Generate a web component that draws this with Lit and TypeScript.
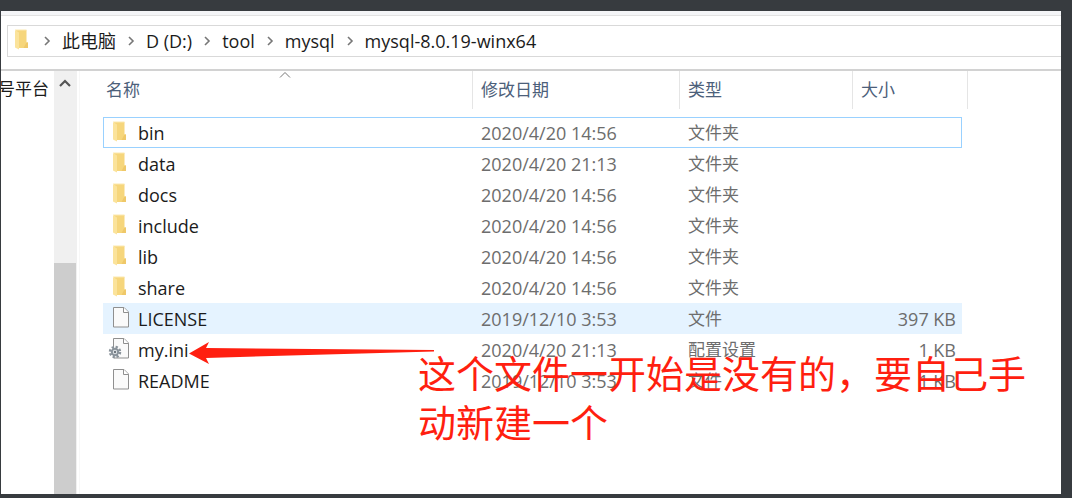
import { LitElement, html, svg, css } from "lit";
import { customElement, property } from "lit/decorators.js";

type Kind = "folder" | "file" | "config";

interface Entry {
  name: string;
  kind: Kind;
  date: string;
  type: string;
  size: string;
  state?: "focused" | "hovered";
}

const ENTRIES: Entry[] = [
  { name: "bin", kind: "folder", date: "2020/4/20 14:56", type: "文件夹", size: "", state: "focused" },
  { name: "data", kind: "folder", date: "2020/4/20 21:13", type: "文件夹", size: "" },
  { name: "docs", kind: "folder", date: "2020/4/20 14:56", type: "文件夹", size: "" },
  { name: "include", kind: "folder", date: "2020/4/20 14:56", type: "文件夹", size: "" },
  { name: "lib", kind: "folder", date: "2020/4/20 14:56", type: "文件夹", size: "" },
  { name: "share", kind: "folder", date: "2020/4/20 14:56", type: "文件夹", size: "" },
  { name: "LICENSE", kind: "file", date: "2019/12/10 3:53", type: "文件", size: "397 KB", state: "hovered" },
  { name: "my.ini", kind: "config", date: "2020/4/20 21:13", type: "配置设置", size: "1 KB" },
  { name: "README", kind: "file", date: "2019/12/10 3:53", type: "文件", size: "1 KB" },
];

const PATH = ["此电脑", "D (D:)", "tool", "mysql", "mysql-8.0.19-winx64"];

const folder = svg`
  <path d="M8 3H18.500V15.500H20V21H8Z" fill="#f6d67c"/>
  <path d="M18.500 15.500H20V21H15.500Z" fill="#efc869"/>
  <path d="M7 3L11 5.500V22.500L7 20.500Z" fill="#fbe39b"/>
  <path d="M7 3H18.500" stroke="#fbe8b0" stroke-width="1"/>`;

const sheet = svg`
  <path d="M7.500 2.500H18L22.500 7V22H7.500Z" fill="#fafafa" stroke="#8f8f8f"/>
  <path d="M17.500 2.500V7.500H22.500" fill="#fff" stroke="#8f8f8f"/>`;

const gear = svg`
  <circle cx="9" cy="16" r="5" fill="none" stroke="#8a939b" stroke-width="2.500" stroke-dasharray="2.200 1.730"/>
  <circle cx="9" cy="16" r="3.200" fill="#e3e7ea" stroke="#8a939b" stroke-width="2"/>
  <circle cx="9" cy="16" r="1.200" fill="#6d757c"/>`;

@customElement("file-icon")
export class FileIcon extends LitElement {
  @property() kind: Kind = "folder";

  static styles = css`
    :host { display: block; flex: none; width: 26px; height: 24px; }
    .icon { display: block; width: 100%; height: 100%; }
  `;

  render() {
    return html`<svg class="icon" viewBox="0 2 26 24" aria-hidden="true">
      ${this.kind === "folder" ? folder : sheet}
      ${this.kind === "config" ? gear : null}
    </svg>`;
  }
}

@customElement("app-root")
export class AppRoot extends LitElement {
  static styles = css`
    :host {
      display: block;
      font-family: "Open Sans", "Noto Sans CJK SC", sans-serif;
      font-size: 17px;
      line-height: 24px;
      color: #1b1b1b;
    }
    .desktop {
      box-sizing: border-box;
      display: flex;
      height: 100vh;
      padding: 11px 11px 4px 1px;
      background: #373b3f;
    }
    .window {
      position: relative;
      display: flex;
      flex: 1;
      flex-direction: column;
      min-width: 0;
      overflow: hidden;
      background: #fff;
    }
    button {
      margin: 0;
      padding: 0;
      border: 0;
      background: none;
      color: inherit;
      font: inherit;
      text-align: left;
    }
    .ribbon { flex: none; height: 4px; background: #f4f5f7; border-bottom: 1px solid #e2e2e2; }
    .toolbar { flex: none; padding: 9px 0 12px 6px; border-bottom: 2px solid #d2d2d2; }
    .address {
      display: flex;
      align-items: center;
      height: 30px;
      border: 1px solid #d9d9d9;
      border-right: 0;
      font-size: 18px;
    }
    .crumbs { display: flex; align-items: center; margin: 0; padding: 0; list-style: none; }
    .crumb { display: flex; align-items: center; white-space: nowrap; }
    .sep { display: block; width: 8px; height: 12px; margin: 0 11px; }
    .crumb:first-child .sep { margin-left: 9px; }
    .body { display: flex; flex: 1; min-height: 0; }
    .tree {
      display: flex;
      flex: none;
      justify-content: flex-end;
      box-sizing: border-box;
      width: 53px;
      padding: 6px 5px 0 0;
      overflow: hidden;
      white-space: nowrap;
    }
    .tree button { align-self: flex-start; }
    .scroll {
      display: flex;
      flex: none;
      flex-direction: column;
      width: 22px;
      border-right: 1px solid #f0f0f0;
      background: #f0f0f0;
    }
    .up { display: flex; justify-content: center; padding: 7px 0; }
    .thumb { flex: 1; margin-top: 168px; background: #cdcdcd; }
    .list { flex: 1; min-width: 0; margin-left: 2px; padding-left: 23px; border-left: 1px solid #f7f7f7; }
    .files { width: 865px; border-spacing: 0; table-layout: fixed; }
    .c-name { width: 370px; }
    .c-date { width: 207px; }
    .c-type { width: 173px; }
    .c-size { width: 109px; }
    th {
      position: relative;
      box-sizing: border-box;
      height: 38px;
      padding: 0 0 0 8px;
      border-right: 1px solid #e5e5e5;
      color: #4c607a;
      font-weight: 400;
      text-align: left;
    }
    th:first-child { padding-left: 3px; }
    .sort { position: absolute; top: 0; left: 176px; width: 12px; height: 8px; }
    .gap td { height: 8px; padding: 0; }
    td {
      box-sizing: border-box;
      height: 31px;
      padding: 1px 0 0 8px;
      color: #6d6d6d;
      white-space: nowrap;
    }
    td:first-child { padding-left: 3px; }
    .name { display: flex; align-items: center; gap: 6px; color: #1b1b1b; font-size: 18px; }
    .date { font-size: 18px; }
    .size { padding-right: 6px; font-size: 18px; text-align: right; }
    .hovered td { background: #e5f3ff; }
    .focused td { box-shadow: inset 0 1px #99d1ff, inset 0 -1px #99d1ff; }
    .focused td:first-child { box-shadow: inset 0 1px #99d1ff, inset 0 -1px #99d1ff, inset 1px 0 #99d1ff; }
    .focused td:last-child { box-shadow: inset 0 1px #99d1ff, inset 0 -1px #99d1ff, inset -1px 0 #99d1ff; }
    .arrow { position: absolute; top: 330px; left: 187px; width: 248px; height: 24px; }
    .note {
      position: absolute;
      top: 336px;
      left: 417px;
      width: 620px;
      margin: 0;
      color: #ff1f10;
      font-family: "Noto Sans CJK SC", sans-serif;
      font-size: 38px;
      line-height: 49px;
    }
  `;

  private row(e: Entry) {
    return html`<tr class=${e.state ?? ""}>
      <td><div class="name"><file-icon .kind=${e.kind}></file-icon><span>${e.name}</span></div></td>
      <td class="date">${e.date}</td>
      <td>${e.type}</td>
      <td class="size">${e.size}</td>
    </tr>`;
  }

  render() {
    return html`<main class="desktop">
      <div class="window">
        <div class="ribbon"></div>
        <div class="toolbar">
          <nav class="address">
            <file-icon kind="folder"></file-icon>
            <ol class="crumbs">
              ${PATH.map(
                (p) => html`<li class="crumb">
                  <svg class="sep" viewBox="0 0 8 12" aria-hidden="true">
                    <path d="M2 2L6 6L2 10" fill="none" stroke="#777" stroke-width="1.600"/>
                  </svg>
                  <button type="button">${p}</button>
                </li>`
              )}
            </ol>
          </nav>
        </div>
        <div class="body">
          <aside class="tree"><button type="button">号平台</button></aside>
          <div class="scroll">
            <button class="up" type="button" aria-label="向上滚动">
              <svg width="14" height="10" viewBox="0 0 14 10" aria-hidden="true">
                <path d="M2 8L7 3L12 8" fill="none" stroke="#555" stroke-width="2.200"/>
              </svg>
            </button>
            <div class="thumb"></div>
          </div>
          <section class="list">
            <table class="files">
              <colgroup>
                <col class="c-name" /><col class="c-date" /><col class="c-type" /><col class="c-size" /><col />
              </colgroup>
              <thead>
                <tr>
                  <th>
                    <button type="button">名称</button>
                    <svg class="sort" viewBox="0 0 12 8" aria-hidden="true">
                      <path d="M1 6.500L6 1.500L11 6.500" fill="none" stroke="#777"/>
                    </svg>
                  </th>
                  <th><button type="button">修改日期</button></th>
                  <th><button type="button">类型</button></th>
                  <th colspan="2"><button type="button">大小</button></th>
                </tr>
              </thead>
              <tbody>
                <tr class="gap"><td colspan="5"></td></tr>
                ${ENTRIES.map((e) => this.row(e))}
              </tbody>
            </table>
          </section>
        </div>
        <svg class="arrow" viewBox="0 0 248 24" aria-hidden="true">
          <path d="M1 12.500L21 1L18 7L246 9V10.500L120 14L18 17L21 23Z" fill="#ff1f10"/>
        </svg>
        <p class="note">这个文件一开始是没有的，要自己手动新建一个</p>
      </div>
    </main>`;
  }
}
